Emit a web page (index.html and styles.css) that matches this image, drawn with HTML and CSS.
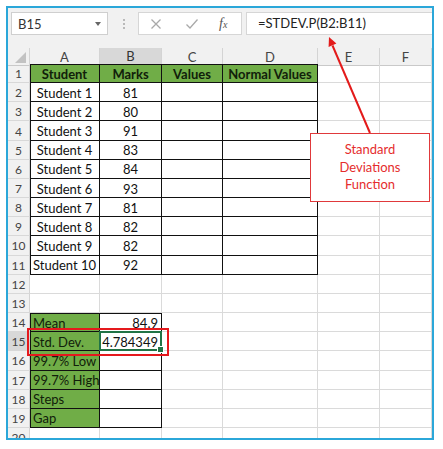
FILE: index.html
```html
<!DOCTYPE html>
<html>
<head>
<meta charset="utf-8">
<title>STDEV.P</title>
<link rel="stylesheet" href="styles.css">
</head>
<body>
<div class="frame">
  <div class="toolbar">
    <div class="namebox"><span class="nb-text">B15</span><span class="caret"></span></div>
    <div class="sep"><i></i><i></i><i></i></div>
    <div class="fbtns">
      <svg class="ico ico-x" width="12" height="12" viewBox="0 0 12 12"><path d="M1.5 1.5L10.5 10.5M10.5 1.5L1.5 10.5" stroke="#a9a9a9" stroke-width="1.3" fill="none"/></svg>
      <svg class="ico ico-ck" width="14" height="12" viewBox="0 0 14 12"><path d="M1.5 6.5L5 10L12.5 1.5" stroke="#a9a9a9" stroke-width="1.3" fill="none"/></svg>
      <span class="fx"><span class="fx-f">f</span><span class="fx-x">x</span></span>
    </div>
    <div class="formula">=STDEV.P(B2:B11)</div>
  </div>

  <div class="sheet">
    <div class="r hdr">
      <div class="corner"><span class="tri"></span></div>
      <div class="ch">A</div><div class="ch sel">B</div><div class="ch">C</div><div class="ch">D</div><div class="ch">E</div><div class="ch">F</div>
    </div>
    <div class="r">
      <div class="h">1</div>
      <div class="c g k kl kt b">Student</div><div class="c g k kt b">Marks</div><div class="c g k kt b">Values</div><div class="c g k kt b">Normal Values</div><div class="c"></div><div class="c"></div>
    </div>
    <div class="r"><div class="h">2</div><div class="c k kl">Student 1</div><div class="c k">81</div><div class="c k"></div><div class="c k"></div><div class="c"></div><div class="c"></div></div>
    <div class="r"><div class="h">3</div><div class="c k kl">Student 2</div><div class="c k">80</div><div class="c k"></div><div class="c k"></div><div class="c"></div><div class="c"></div></div>
    <div class="r"><div class="h">4</div><div class="c k kl">Student 3</div><div class="c k">91</div><div class="c k"></div><div class="c k"></div><div class="c"></div><div class="c"></div></div>
    <div class="r"><div class="h">5</div><div class="c k kl">Student 4</div><div class="c k">83</div><div class="c k"></div><div class="c k"></div><div class="c"></div><div class="c"></div></div>
    <div class="r"><div class="h">6</div><div class="c k kl">Student 5</div><div class="c k">84</div><div class="c k"></div><div class="c k"></div><div class="c"></div><div class="c"></div></div>
    <div class="r"><div class="h">7</div><div class="c k kl">Student 6</div><div class="c k">93</div><div class="c k"></div><div class="c k"></div><div class="c"></div><div class="c"></div></div>
    <div class="r"><div class="h">8</div><div class="c k kl">Student 7</div><div class="c k">81</div><div class="c k"></div><div class="c k"></div><div class="c"></div><div class="c"></div></div>
    <div class="r"><div class="h">9</div><div class="c k kl">Student 8</div><div class="c k">82</div><div class="c k"></div><div class="c k"></div><div class="c"></div><div class="c"></div></div>
    <div class="r"><div class="h">10</div><div class="c k kl">Student 9</div><div class="c k">82</div><div class="c k"></div><div class="c k"></div><div class="c"></div><div class="c"></div></div>
    <div class="r"><div class="h">11</div><div class="c k kl">Student 10</div><div class="c k">92</div><div class="c k"></div><div class="c k"></div><div class="c"></div><div class="c"></div></div>
    <div class="r"><div class="h">12</div><div class="c"></div><div class="c"></div><div class="c"></div><div class="c"></div><div class="c"></div><div class="c"></div></div>
    <div class="r"><div class="h">13</div><div class="c"></div><div class="c"></div><div class="c"></div><div class="c"></div><div class="c"></div><div class="c"></div></div>
    <div class="r"><div class="h">14</div><div class="c g k kl kt lft">Mean</div><div class="c k kt rgt">84.9</div><div class="c"></div><div class="c"></div><div class="c"></div><div class="c"></div></div>
    <div class="r"><div class="h hsel">15</div><div class="c g k kl lft">Std. Dev.</div><div class="c k rgt active">4.784349</div><div class="c"></div><div class="c"></div><div class="c"></div><div class="c"></div></div>
    <div class="r"><div class="h">16</div><div class="c g k kl lft">99.7% Low</div><div class="c k"></div><div class="c"></div><div class="c"></div><div class="c"></div><div class="c"></div></div>
    <div class="r"><div class="h">17</div><div class="c g k kl lft">99.7% High</div><div class="c k"></div><div class="c"></div><div class="c"></div><div class="c"></div><div class="c"></div></div>
    <div class="r"><div class="h">18</div><div class="c g k kl lft">Steps</div><div class="c k"></div><div class="c"></div><div class="c"></div><div class="c"></div><div class="c"></div></div>
    <div class="r"><div class="h">19</div><div class="c g k kl lft">Gap</div><div class="c k"></div><div class="c"></div><div class="c"></div><div class="c"></div><div class="c"></div></div>
    <div class="r"><div class="h">20</div><div class="c"></div><div class="c"></div><div class="c"></div><div class="c"></div><div class="c"></div><div class="c"></div></div>
  </div>

  <div class="redbox"></div>

  <svg class="arrow" width="424" height="430" viewBox="0 0 424 430">
    <line x1="362" y1="125" x2="324.5" y2="37.5" stroke="#e31b1b" stroke-width="2"/>
    <polygon points="321,29 328.4,35.6 320.6,39" fill="#e31b1b"/>
  </svg>

  <div class="callout">Standard<br>Deviations<br>Function</div>
</div>
</body>
</html>
```

FILE: styles.css
```css
* { box-sizing: border-box; }

html, body {
  margin: 0;
  padding: 0;
  background: #ffffff;
}

body {
  font-family: "Lato", "Liberation Sans", sans-serif;
  font-size: 13px;
  color: #111;
}

.frame {
  position: relative;
  margin: 6px 0 0 6px;
  width: 428px;
  height: 434px;
  border: 2px solid #2ba7d9;
  overflow: hidden;
  background: #fff;
}

/* ---------- formula bar ---------- */
.toolbar {
  height: 40px;
  background: #f1f1f1;
  display: flex;
  align-items: flex-start;
  padding: 4px 0 0 3px;
}

.namebox {
  width: 97px;
  height: 23px;
  background: #fff;
  border: 1px solid #cfcfcf;
  display: flex;
  align-items: center;
  justify-content: space-between;
  padding: 0 6px 0 6px;
  color: #333;
  font-size: 13px;
}

.caret {
  width: 0;
  height: 0;
  border-left: 3px solid transparent;
  border-right: 3px solid transparent;
  border-top: 4px solid #666;
  margin-top: 1px;
}

.sep {
  width: 30px;
  height: 23px;
  display: flex;
  flex-direction: column;
  align-items: center;
  justify-content: center;
  gap: 2px;
  padding-left: 1px;
}
.sep i {
  display: block;
  width: 2px;
  height: 2px;
  background: #b9b9b9;
}

.fbtns {
  width: 104px;
  height: 23px;
  background: #fff;
  border: 1px solid #d6d6d6;
  display: flex;
  align-items: center;
  padding-left: 11px;
}
.ico-x { margin-right: 23px; }
.ico-ck { margin-right: 20px; }

.fx {
  font-family: "Liberation Serif", "DejaVu Serif", serif;
  font-style: italic;
  color: #555;
  font-size: 14px;
  display: flex;
  align-items: baseline;
}
.fx-x { font-size: 10px; margin-left: 0; }

.formula {
  flex: 1;
  height: 23px;
  margin-left: 4px;
  margin-right: -10px;
  background: #fff;
  border: 1px solid #d6d6d6;
  padding-left: 11px;
  line-height: 21px;
  font-size: 13px;
  color: #222;
  white-space: nowrap;
}

/* ---------- grid ---------- */
.sheet {
  display: flex;
  flex-direction: column;
}

.r {
  display: grid;
  grid-template-columns: 22px 70px 62px 61px 95px 62px 52px;
  height: 19.17px;
  flex: none;
}
.r.hdr { height: 16px; }

.corner, .ch, .h {
  background: #f1f1f1;
  color: #444;
  border-right: 1px solid #d4d4d4;
  border-bottom: 1px solid #c9c9c9;
  display: flex;
  align-items: center;
  justify-content: center;
}

.corner {
  position: relative;
}
.tri {
  position: absolute;
  right: 3px;
  bottom: 2px;
  width: 0;
  height: 0;
  border-left: 11px solid transparent;
  border-bottom: 11px solid #c2c2c2;
}

.ch {
  font-size: 13px;
  line-height: 16px;
}
.ch.sel {
  background: #d8d8d8;
  border-bottom: 2px solid #217346;
  color: #333;
}

.h {
  font-size: 12px;
  border-bottom-color: #d8d8d8;
  padding-top: 1px;
}
.h.hsel {
  background: #d8d8d8;
}

.c {
  border-right: 1px solid #dadada;
  border-bottom: 1px solid #dadada;
  display: flex;
  align-items: center;
  justify-content: center;
  white-space: nowrap;
  padding-top: 1px;
  overflow: visible;
}

.c.k {
  border-right-color: #111;
  border-bottom-color: #111;
}
.c.kl { box-shadow: inset 1px 0 0 #111; }
.c.kt { box-shadow: inset 0 1px 0 #111; }
.c.kl.kt { box-shadow: inset 1px 1px 0 #111; }

.c.g {
  background: #70ad47;
  color: #10200a;
}
.c.b { font-weight: 700; }

.c.lft {
  justify-content: flex-start;
  padding-left: 3px;
}
.c.rgt {
  justify-content: flex-end;
  padding-right: 3px;
}

.c.active {
  position: relative;
}
.c.active::before {
  content: "";
  position: absolute;
  left: -1px;
  top: -1px;
  right: -1px;
  bottom: -1px;
  border: 2px solid #217346;
}
.c.active::after {
  content: "";
  position: absolute;
  right: -3px;
  bottom: -3px;
  width: 5px;
  height: 5px;
  background: #217346;
  border: 1px solid #fff;
}

/* ---------- overlays ---------- */
.redbox {
  position: absolute;
  left: 19px;
  top: 320px;
  width: 142px;
  height: 28px;
  border: 2px solid #e5191d;
}

.arrow {
  position: absolute;
  left: 0;
  top: 0;
  pointer-events: none;
}

.callout {
  position: absolute;
  left: 302px;
  top: 125px;
  width: 120px;
  height: 69px;
  background: #fff;
  border: 1px solid #e0393b;
  color: #e52d2d;
  font-family: "Lato", "Liberation Sans", sans-serif;
  font-size: 13px;
  line-height: 17.5px;
  text-align: center;
  padding-top: 7px;
}
```
